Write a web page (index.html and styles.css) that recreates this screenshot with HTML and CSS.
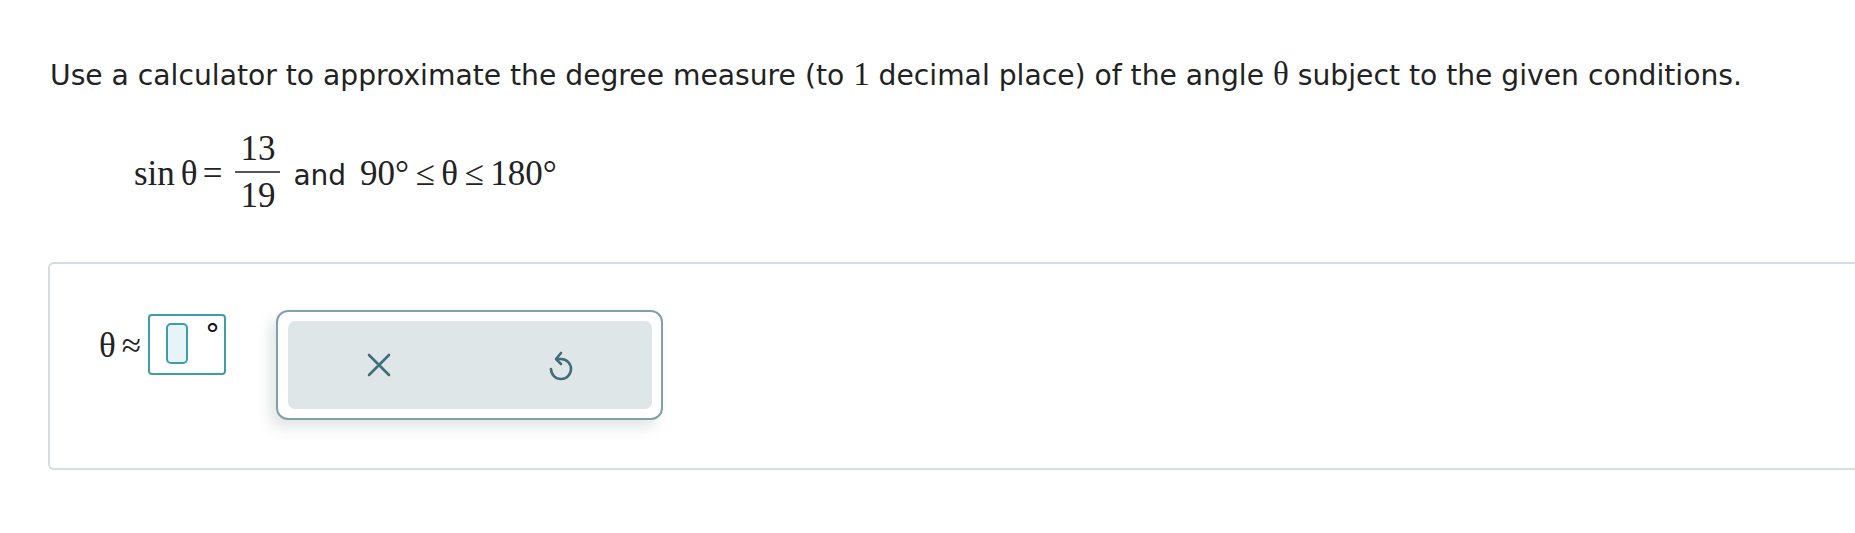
FILE: index.html
```html
<!DOCTYPE html>
<html lang="en">
<head>
<meta charset="utf-8">
<title>Question</title>
<link rel="stylesheet" href="styles.css">
</head>
<body>
<div class="page">
  <p class="question">Use a calculator to approximate the degree measure (to <span class="m">1</span> decimal place) of the angle <span class="m">θ</span> subject to the given conditions.</p>
  <div class="given"><span class="m">sin<span class="thin"></span>θ</span><span class="m rel">=</span><span class="frac"><span class="num">13</span><span class="bar"></span><span class="den">19</span></span><span class="and">and</span><span class="m">90°<span class="le">≤</span>θ<span class="le">≤</span>180°</span></div>
  <div class="panel">
    <div class="answer">
      <span class="m lhs">θ<span class="rel">≈</span></span>
      <span class="inbox"><span class="slot"></span><span class="deg">°</span></span>
    </div>
    <div class="tools">
      <div class="tools-inner">
        <button class="tool" aria-label="Clear">
          <svg width="26" height="26" viewBox="0 0 26 26"><path d="M3 3 L23 23 M23 3 L3 23" stroke="#3f6d79" stroke-width="2.6" stroke-linecap="round" fill="none"/></svg>
        </button>
        <button class="tool" aria-label="Undo">
          <svg width="30" height="34" viewBox="0 0 30 34"><path d="M11 11 H15 A10 10 0 1 1 5 21" stroke="#3f6d79" stroke-width="2.6" stroke-linecap="round" fill="none"/><path d="M15 5 L10 11 L15 16" stroke="#3f6d79" stroke-width="2.6" stroke-linecap="round" stroke-linejoin="round" fill="none"/></svg>
        </button>
      </div>
    </div>
  </div>
</div>
</body>
</html>
```
FILE: styles.css
```css
html, body {
  margin: 0;
  padding: 0;
  background: #ffffff;
  overflow: hidden;
}
.page {
  padding: 57px 0 0 50px;
  font-family: "DejaVu Sans", Verdana, sans-serif;
  color: #222222;
}
.question {
  margin: 0;
  font-size: 28.2px;
  line-height: 34px;
  white-space: nowrap;
}
.m {
  font-family: "Liberation Serif", "Times New Roman", serif;
}
.question .m {
  font-size: 33px;
}
.given {
  margin: 38px 0 0 84px;
  height: 82px;
  font-family: "Liberation Serif", "Times New Roman", serif;
  font-size: 35px;
  line-height: 35px;
  white-space: nowrap;
}
.thin { display: inline-block; width: 6px; }
.rel { margin: 0 5px; }
.le { margin: 0 6.5px; }
.frac {
  display: inline-flex;
  flex-direction: column;
  align-items: stretch;
  text-align: center;
  line-height: 35px;
  vertical-align: 25px;
  margin: 0 0 0 8px;
}
.num, .den {
  display: block;
  padding: 0 5px;
}
.bar {
  display: block;
  height: 2px;
  background: #555555;
  margin: 5px 0 5px;
}
.and {
  font-family: "DejaVu Sans", Verdana, sans-serif;
  font-size: 28px;
  margin: 0 14px 0 13px;
}
.panel {
  margin-top: 49px;
  margin-left: -2px;
  width: 1830px;
  height: 208px;
  border: 2px solid #d5dde0;
  border-right: none;
  border-radius: 6px 0 0 6px;
  display: flex;
  align-items: flex-start;
  padding: 46px 0 0 49px;
  box-sizing: border-box;
  gap: 50px;
}
.answer {
  display: flex;
  align-items: center;
  height: 64px;
}
.lhs {
  font-size: 35px;
  line-height: 35px;
  margin-right: 1px;
  margin-top: 6px;
}
.lhs .rel { margin: 0 6px 0 6px; }
.inbox {
  display: flex;
  align-items: flex-start;
  width: 78px;
  height: 61px;
  box-sizing: border-box;
  border: 2px solid #3f9cab;
  border-radius: 4px;
  padding: 7px 0 0 16px;
  margin-top: 4px;
}
.slot {
  width: 22px;
  height: 41px;
  box-sizing: border-box;
  border: 2px solid #3f9cab;
  border-radius: 5px;
  background: #e6f4f8;
}
.deg {
  display: block;
  font-size: 30px;
  line-height: 30px;
  margin: -3px 0 0 17px;
  color: #111111;
}
.tools {
  width: 387px;
  height: 110px;
  box-sizing: border-box;
  border: 2px solid #82a0a8;
  border-radius: 12px;
  padding: 9px 9px 9px 10px;
  background: #ffffff;
  box-shadow: -6px 8px 14px rgba(40, 60, 70, 0.13);
}
.tools-inner {
  display: flex;
  height: 100%;
  background: #dfe6e8;
  border-radius: 7px;
}
.tool {
  flex: 1;
  border: none;
  background: transparent;
  display: flex;
  align-items: center;
  justify-content: center;
  padding: 0;
  cursor: pointer;
}
```
